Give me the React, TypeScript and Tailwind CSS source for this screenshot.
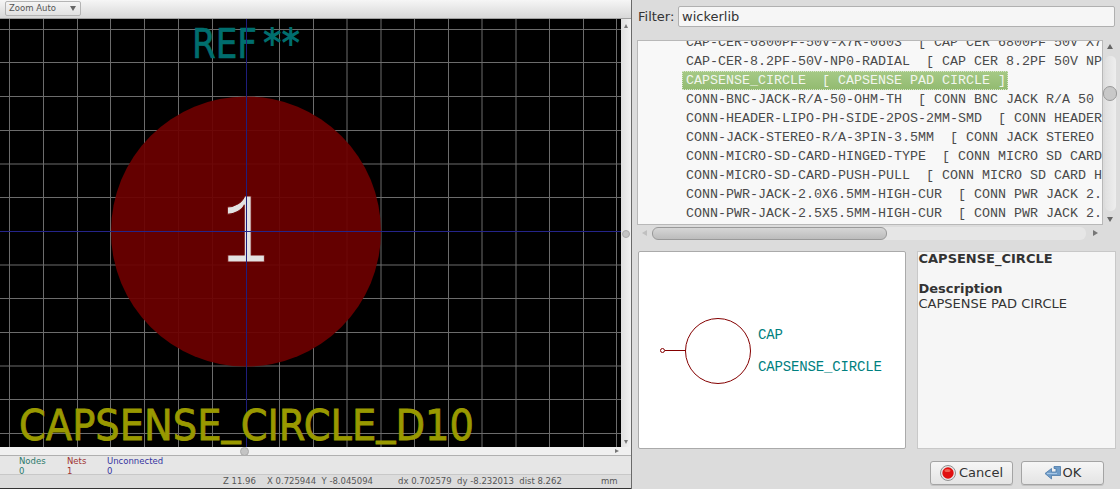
import React from "react";

const V = [9.5, 43.5, 77.5, 110.5, 144.5, 178.5, 212.5, 279.5, 313.5, 347, 381, 414.5, 448.5, 482, 516, 549.5, 583.5, 616.5];
const H = [29.5, 62.5, 96.5, 130.5, 164, 197.5, 265, 298.5, 332.5, 366, 399.5, 433.5];

const rows = [
  "CAP-CER-6800PF-50V-X7R-0603  [ CAP CER 6800PF 50V X7",
  "CAP-CER-8.2PF-50V-NP0-RADIAL  [ CAP CER 8.2PF 50V NP",
  "CAPSENSE_CIRCLE  [ CAPSENSE PAD CIRCLE ]",
  "CONN-BNC-JACK-R/A-50-OHM-TH  [ CONN BNC JACK R/A 50",
  "CONN-HEADER-LIPO-PH-SIDE-2POS-2MM-SMD  [ CONN HEADER",
  "CONN-JACK-STEREO-R/A-3PIN-3.5MM  [ CONN JACK STEREO",
  "CONN-MICRO-SD-CARD-HINGED-TYPE  [ CONN MICRO SD CARD",
  "CONN-MICRO-SD-CARD-PUSH-PULL  [ CONN MICRO SD CARD H",
  "CONN-PWR-JACK-2.0X6.5MM-HIGH-CUR  [ CONN PWR JACK 2.",
  "CONN-PWR-JACK-2.5X5.5MM-HIGH-CUR  [ CONN PWR JACK 2.",
];

function Board() {
  return (
    <svg width="621" height="428" viewBox="0 19 621 428" className="block">
      <rect x="0" y="19" width="621" height="428" fill="#000" />
      {V.map((x) => (
        <line key={x} x1={x} x2={x} y1="19" y2="447" stroke="#6c6c6c" strokeWidth="1" />
      ))}
      {H.map((y) => (
        <line key={y} x1="0" x2="621" y1={y} y2={y} stroke="#6c6c6c" strokeWidth="1" />
      ))}
      <circle cx="246" cy="231.5" r="135" fill="#6c0000" fillOpacity="0.92" />
      <text x="192" y="58" fill="#006e6e" stroke="#006e6e" strokeWidth="0.7" fontFamily="'DejaVu Sans', sans-serif" fontSize="41" textLength="65" lengthAdjust="spacingAndGlyphs">
        REF
      </text>
      <text x="263" y="57" fill="#006e6e" fontFamily="'DejaVu Sans', sans-serif" fontWeight="700" fontSize="41" textLength="37" lengthAdjust="spacingAndGlyphs">
        **
      </text>
      <text x="222" y="262" fill="#e2e2e2" stroke="#6c0000" strokeWidth="1" paintOrder="fill stroke" fontFamily="'Liberation Mono', monospace" fontSize="100" textLength="46" lengthAdjust="spacingAndGlyphs">
        1
      </text>
      <line x1="246.5" x2="246.5" y1="19" y2="447" stroke="#1e1e7c" />
      <line x1="0" x2="621" y1="231.5" y2="231.5" stroke="#24248a" />
      <text x="19" y="440" fill="#999900" stroke="#999900" strokeWidth="0.8" fontFamily="'DejaVu Sans', sans-serif" fontSize="42" textLength="455" lengthAdjust="spacingAndGlyphs">
        <tspan>CAPSENSE</tspan>
        <tspan dy="-6">_</tspan>
        <tspan dy="6">CIRCLE</tspan>
        <tspan dy="-6">_</tspan>
        <tspan dy="6">D10</tspan>
      </text>
    </svg>
  );
}

function CancelIcon() {
  return (
    <svg width="16" height="16" viewBox="0 0 16 16">
      <circle cx="8" cy="8" r="7.5" fill="#e8e8e8" stroke="#909090" />
      <circle cx="8" cy="8" r="5.7" fill="#e01010" />
      <ellipse cx="7.5" cy="5.5" rx="3" ry="1.6" fill="#f06050" />
    </svg>
  );
}

function OkIcon() {
  return (
    <svg width="18" height="16" viewBox="0 0 18 16">
      <path d="M10 1.5h6.5v9H7.5V14L1 8.5 7.5 3.5v3.5H12V3.5H10z" fill="#6f9cc8" stroke="#4a78a8" strokeWidth="0.8" strokeLinejoin="round" />
      <path d="M3 8.5h10" stroke="#a8c8e6" strokeWidth="1.2" />
    </svg>
  );
}

function Button({ icon, label, gap }: { icon: React.ReactNode; label: string; gap: string }) {
  return (
    <button className={`w-[83px] h-[24px] rounded-[3px] border border-[#a4a4a4] bg-gradient-to-b from-[#f6f6f6] to-[#e4e4e4] flex items-center justify-center ${gap} text-[13px] text-[#333] shadow-[0_1px_0_#c4c4c4]`}>
      {icon}
      <span>{label}</span>
    </button>
  );
}

export default function App() {
  return (
    <div className="w-[1120px] h-[489px] flex overflow-hidden bg-[#dcdcdc] text-[#333]" style={{ fontFamily: "'DejaVu Sans', sans-serif" }}>
      {/* Left: footprint viewer */}
      <div className="w-[631px] h-[489px] flex flex-col shrink-0 bg-[#e6e6e6]">
        <div className="h-[19px] shrink-0 bg-gradient-to-b from-[#f6f6f6] to-[#d8d8d8] border-b border-[#a0a0a0] pl-[5px] pt-[1px]">
          <div className="w-[76px] h-[15px] rounded-[2px] border border-[#b4b4b4] bg-gradient-to-b from-[#f4f4f4] to-[#e2e2e2] flex items-center justify-between pl-[3px] pr-[4px] text-[8.5px] leading-none text-[#555]">
            <span>Zoom Auto</span>
            <span className="w-0 h-0 border-l-[3px] border-r-[3px] border-t-[5px] border-l-transparent border-r-transparent border-t-[#666]" />
          </div>
        </div>
        <div className="h-[428px] shrink-0 flex">
          <Board />
          <div className="w-[10px] bg-gradient-to-r from-[#e0e0e0] to-[#f2f2f2] flex flex-col items-center justify-between pt-[2px] pb-[2px]">
            <span className="w-0 h-0 mt-[3px] border-l-[2.5px] border-r-[2.5px] border-b-[4px] border-l-transparent border-r-transparent border-b-[#777]" />
            <span className="w-[8px] h-[8px] rounded-full bg-[#c4c4c4] border border-[#aaa]" />
            <span className="w-0 h-0 mb-[1px] border-l-[2.5px] border-r-[2.5px] border-t-[4px] border-l-transparent border-r-transparent border-t-[#777]" />
          </div>
        </div>
        <div className="h-[9px] shrink-0 flex items-center justify-between bg-[#f0f0f0] border-b border-[#b0b0b0] pr-[12px] pl-[240px]">
          <span className="w-[9px] h-[9px] rounded-full bg-[#c4c4c4] border border-[#aaa]" />
          <span className="w-0 h-0 border-t-[2.5px] border-b-[2.5px] border-l-[4px] border-t-transparent border-b-transparent border-l-[#777]" />
        </div>
        <div className="h-[19px] shrink-0 flex pl-[19px] pt-[1px] border-b border-[#c8c8c8] text-[8.5px] leading-[9.5px]">
          <div className="w-[48px] text-[#2c7a6c]"><div>Nodes</div><div>0</div></div>
          <div className="w-[40px] text-[#a03434]"><div>Nets</div><div>1</div></div>
          <div className="text-[#3434a0]"><div>Unconnected</div><div>0</div></div>
        </div>
        <div className="h-[13px] shrink-0 flex items-center pl-[223px] bg-[#dcdcdc] text-[8.5px] leading-none text-[#555] whitespace-pre">
          <span className="w-[44px]">Z 11.96</span>
          <span className="w-[131px]">X 0.725944  Y -8.045094</span>
          <span className="w-[203px]">dx 0.702579  dy -8.232013  dist 8.262</span>
          <span>mm</span>
        </div>
        <div className="h-[1px] shrink-0 bg-[#333]" />
      </div>
      <div className="w-[1px] shrink-0 bg-[#6a6a6a]" />

      {/* Right: chooser */}
      <div className="flex-1 flex flex-col pl-[5px] pr-[4px]">
        <div className="h-[40px] shrink-0 flex items-start pt-[6px] pl-[1px]">
          <span className="w-[40px] h-[21px] flex items-center text-[13px]">Filter:</span>
          <div className="w-[437px] h-[21px] rounded-[2px] border border-[#b0b0b0] bg-[#f6f6f6] flex items-center pl-[3px] text-[13px]">wickerlib</div>
        </div>

        <div className="h-[185px] shrink-0 flex">
          <div className="w-[466px] h-[185px] overflow-hidden border border-[#b8b8b8] bg-[#f8f8f8] pl-[48px] whitespace-pre text-[13.33px] text-[#4a4a4a]" style={{ fontFamily: "'Liberation Mono', monospace" }}>
            <div className="-mt-[8px]">
              {rows.map((r) => {
                const sel = r.startsWith("CAPSENSE");
                return (
                  <div key={r} className="h-[19px] leading-[19px]">
                    {sel ? (
                      <span className="inline-block h-[19px] -ml-[4px] w-[326px] pl-[4px] bg-gradient-to-b from-[#a6ca86] to-[#92ba70] text-[#f2f6ee] outline-1 outline-dotted -outline-offset-1 outline-[#d8e6cc]">{r}</span>
                    ) : (
                      r
                    )}
                  </div>
                );
              })}
            </div>
          </div>
          <div className="flex-1 flex flex-col items-center justify-between pt-[4px] pb-[3px] pl-[1px]">
            <span className="w-0 h-0 border-l-[3.5px] border-r-[3.5px] border-b-[5px] border-l-transparent border-r-transparent border-b-[#666]" />
            <div className="w-[11px] h-[155px] bg-gradient-to-r from-[#e0e0e0] to-[#eeeeee] rounded-[5px] relative">
              <span className="absolute left-[-2px] top-[30px] w-[14px] h-[15px] rounded-full bg-[#c8c8c8] border border-[#999]" />
            </div>
            <span className="w-0 h-0 border-l-[3.5px] border-r-[3.5px] border-t-[5px] border-l-transparent border-r-transparent border-t-[#666]" />
          </div>
        </div>

        <div className="h-[16px] shrink-0 flex items-center pl-[5px]">
          <span className="w-0 h-0 border-t-[3px] border-b-[3px] border-r-[5px] border-t-transparent border-b-transparent border-r-[#c0c0c0]" />
          <div className="ml-[5px] w-[434px] h-[13px] rounded-[6px] bg-[#e6e6e6]">
            <div className="w-[235px] h-[13px] rounded-[6px] border border-[#999] bg-gradient-to-b from-[#d6d6d6] to-[#bcbcbc]" />
          </div>
          <span className="ml-[7px] w-0 h-0 border-t-[3px] border-b-[3px] border-l-[5px] border-t-transparent border-b-transparent border-l-[#777]" />
        </div>

        <div className="h-[10px] shrink-0" />

        <div className="h-[198px] shrink-0 flex pl-[1px]">
          <div className="w-[268px] h-[198px] rounded-[2px] border border-[#aaa] bg-white">
            <svg width="266" height="196" viewBox="639 251 266 196" className="block">
              <circle cx="718" cy="350" r="32.5" fill="none" stroke="#840000" strokeWidth="1" />
              <line x1="665" x2="685.5" y1="349.5" y2="349.5" stroke="#840000" />
              <circle cx="662.5" cy="349.5" r="2" fill="none" stroke="#840000" />
              <text x="758" y="338" fill="#008080" fontFamily="'Liberation Mono', monospace" fontSize="14" textLength="25">CAP</text>
              <text x="758" y="370" fill="#008080" fontFamily="'Liberation Mono', monospace" fontSize="14" textLength="124">CAPSENSE_CIRCLE</text>
            </svg>
          </div>
          <div className="ml-[11px] w-[199px] h-[198px] border border-[#c8c8c8] bg-[#f6f6f6] text-[13px] leading-[15px] pl-[0.5px]">
            <div className="-mt-[1px] font-bold">CAPSENSE_CIRCLE</div>
            <div className="h-[15px]" />
            <div className="font-bold">Description</div>
            <div>CAPSENSE PAD CIRCLE</div>
          </div>
        </div>

        <div className="flex-1 flex items-start justify-end gap-[8px] pt-[12px] pr-[12px]">
          <Button icon={<CancelIcon />} label="Cancel" gap="gap-[3px]" />
          <Button icon={<OkIcon />} label="OK" gap="gap-[1px]" />
        </div>
      </div>
    </div>
  );
}
